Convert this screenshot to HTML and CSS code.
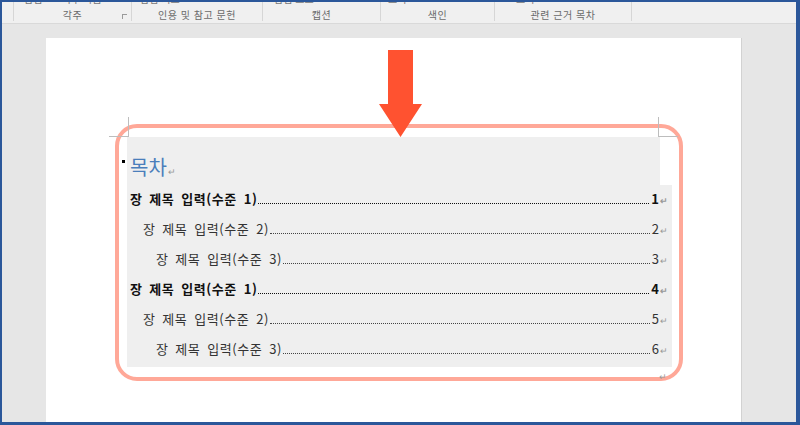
FILE: index.html
```html
<!DOCTYPE html>
<html lang="ko">
<head>
<meta charset="utf-8">
<title>목차</title>
<link rel="stylesheet" href="styles.css">
</head>
<body>
<div class="frame">
  <div class="ribbon">
    <div class="grp g0"></div>
    <div class="grp g1"><span class="lbl">각주</span><span class="launch"></span></div>
    <div class="grp g2"><span class="lbl">인용 및 참고 문헌</span></div>
    <div class="grp g3"><span class="lbl">캡션</span></div>
    <div class="grp g4"><span class="lbl">색인</span></div>
    <div class="grp g5"><span class="lbl">관련 근거 목차</span></div>
    <div class="grp g6"></div>
    <span class="cut c1">삽입</span>
    <span class="cut c2">각주 다음</span>
    <span class="cut c3">삽입 기호</span>
    <span class="cut c4">삽입 도표</span>
    <span class="cut c5">표시</span>
    <span class="cut c6">표시</span>
  </div>
  <div class="work">
    <div class="page">
      <div class="box">
        <div class="head"><span class="bullet"></span><span class="title">목차</span><span class="pm">↵</span></div>
        <div class="toc">
          <div class="line l1"><span class="t">장 제목 입력(수준 1)</span><span class="dots"></span><span class="n">1</span><span class="pm">↵</span></div>
          <div class="line l2"><span class="t">장 제목 입력(수준 2)</span><span class="dots"></span><span class="n">2</span><span class="pm">↵</span></div>
          <div class="line l3"><span class="t">장 제목 입력(수준 3)</span><span class="dots"></span><span class="n">3</span><span class="pm">↵</span></div>
          <div class="line l1"><span class="t">장 제목 입력(수준 1)</span><span class="dots"></span><span class="n">4</span><span class="pm">↵</span></div>
          <div class="line l2"><span class="t">장 제목 입력(수준 2)</span><span class="dots"></span><span class="n">5</span><span class="pm">↵</span></div>
          <div class="line l3"><span class="t">장 제목 입력(수준 3)</span><span class="dots"></span><span class="n">6</span><span class="pm">↵</span></div>
        </div>
      </div>
      <span class="crop tl"></span>
      <span class="crop tr"></span>
      <span class="endpm">↵</span>
      <svg class="arrow" width="44" height="88" viewBox="0 0 44 88">
        <polygon points="9,0 34,0 34,54 43,54 21.5,87 0,54 9,54" fill="#ff5230"/>
      </svg>
    </div>
    <div class="side"></div>
  </div>
</div>
</body>
</html>
```
FILE: styles.css
```css
* { box-sizing: border-box; }
html, body { margin: 0; padding: 0; }
body {
  width: 800px;
  height: 425px;
  overflow: hidden;
  font-family: "Noto Sans CJK KR", "Noto Sans", sans-serif;
  background: #2b579a;
}
.frame {
  width: 800px;
  height: 425px;
  border-style: solid;
  border-color: #2b579a;
  border-width: 2px 4px 3px 2px;
  display: flex;
  flex-direction: column;
  background: #e6e6e6;
  overflow: hidden;
}
.ribbon {
  position: relative;
  height: 22px;
  flex: none;
  background: #f0f0f0;
  border-bottom: 1px solid #d9d9d9;
  display: flex;
}
.grp {
  position: relative;
  height: 19px;
  border-right: 1px solid #d6d6d6;
  display: flex;
  align-items: flex-end;
  justify-content: center;
  padding-bottom: 0;
}
.g0 { width: 12px; }
.g1 { width: 118px; }
.g2 { width: 131px; }
.g3 { width: 118px; }
.g4 { width: 114px; }
.g5 { width: 137px; }
.g6 { flex: 1; border-right: none; }
.lbl {
  font-size: 10px;
  line-height: 12px;
  color: #6a6a6a;
  letter-spacing: 0.5px;
}
.launch {
  position: absolute;
  right: 4px;
  bottom: 2px;
  width: 5px;
  height: 5px;
  border-left: 1px solid #9a9a9a;
  border-top: 1px solid #9a9a9a;
}
.cut {
  position: absolute;
  top: -9px;
  font-size: 10px;
  line-height: 12px;
  color: #777;
}
.c1 { left: 22px; }
.c2 { left: 60px; }
.c3 { left: 138px; }
.c4 { left: 272px; }
.c5 { left: 386px; }
.c6 { left: 514px; }
.work {
  flex: 1;
  display: flex;
  padding-top: 14px;
}
.page {
  position: relative;
  margin-left: 44px;
  width: 695px;
  background: #fff;
  padding: 86px 0 0 69px;
}
.side {
  flex: 1;
  border-left: 1px solid #d2d2d2;
}
.box {
  width: 568px;
  height: 257px;
  border: 4px solid #ffa898;
  border-radius: 22px;
  padding: 9px 0 0 8px;
}
.head {
  width: 533px;
  height: 48px;
  background: #efefef;
  position: relative;
  padding: 18px 0 0 3px;
  display: flex;
  align-items: baseline;
}
.bullet {
  position: absolute;
  left: -5px;
  top: 23px;
  width: 3px;
  height: 3px;
  background: #000;
}
.title {
  font-size: 20px;
  line-height: 24px;
  color: #4a7ebb;
}
.pm {
  font-size: 9px;
  color: #999;
  margin-left: 1px;
}
.toc {
  width: 545px;
  background: #efefef;
  padding: 0 4px 2px 0;
}
.line {
  height: 30px;
  display: flex;
  align-items: baseline;
  padding-top: 4px;
  font-size: 13px;
  line-height: 20px;
  color: #333;
}
.t { letter-spacing: 0.6px; word-spacing: 2.5px; white-space: nowrap; }
.l1 { padding-left: 3px; font-weight: bold; color: #111; }
.l2 { padding-left: 16px; }
.l3 { padding-left: 29px; }
.dots {
  flex: 1;
  border-bottom: 1px dotted #444;
  margin: 0 2px 0 1px;
  height: 1px;
}
.l1 .dots { border-bottom-color: #111; }
.n { font-size: 13px; }
.crop {
  position: absolute;
  width: 20px;
  height: 20px;
}
.crop.tl {
  left: 63px;
  top: 79px;
  border-right: 1px solid #bdbdbd;
  border-bottom: 1px solid #bdbdbd;
}
.crop.tr {
  left: 612px;
  top: 79px;
  border-left: 1px solid #bdbdbd;
  border-bottom: 1px solid #bdbdbd;
}
.endpm {
  position: absolute;
  left: 613px;
  top: 332px;
  font-size: 9px;
  color: #999;
}
.arrow {
  position: absolute;
  left: 333px;
  top: 12px;
}
```
